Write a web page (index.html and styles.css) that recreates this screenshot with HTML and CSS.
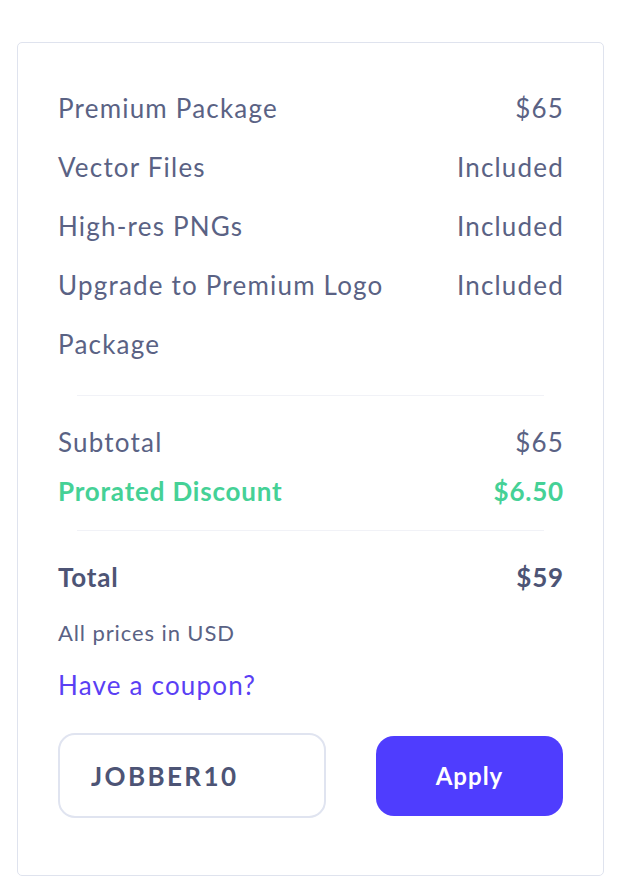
FILE: index.html
```html
<!DOCTYPE html>
<html lang="en">
<head>
<meta charset="utf-8">
<title>Order summary</title>
<link rel="stylesheet" href="styles.css">
</head>
<body>
<div class="card">
  <div class="items">
    <div class="row"><span class="label">Premium Package</span><span class="value">$65</span></div>
    <div class="row"><span class="label">Vector Files</span><span class="value">Included</span></div>
    <div class="row"><span class="label">High-res PNGs</span><span class="value">Included</span></div>
    <div class="row"><span class="label">Upgrade to Premium Logo Package</span><span class="value">Included</span></div>
  </div>
  <div class="divider"></div>
  <div class="sums">
    <div class="row"><span class="label">Subtotal</span><span class="value">$65</span></div>
    <div class="row discount"><span class="label">Prorated Discount</span><span class="value">$6.50</span></div>
  </div>
  <div class="divider divider-low"></div>
  <div class="row total"><span class="label">Total</span><span class="value">$59</span></div>
  <p class="note">All prices in USD</p>
  <a class="coupon-link" href="#">Have a coupon?</a>
  <div class="coupon">
    <input class="coupon-input" type="text" value="JOBBER10">
    <button class="apply" type="button">Apply</button>
  </div>
</div>
</body>
</html>
```
FILE: styles.css
```css
html, body {
  margin: 0;
  padding: 0;
  background: #ffffff;
}

body {
  font-family: Lato, "Noto Sans", sans-serif;
  color: #5a6284;
}

.card {
  box-sizing: border-box;
  width: 587px;
  margin: 42px 0 0 17px;
  padding: 36px 40px 57px 40px;
  border: 1px solid #dfe3ee;
  border-radius: 5px;
  background: #fff;
}

.row {
  display: flex;
  justify-content: space-between;
  align-items: flex-start;
  gap: 24px;
  font-size: 26px;
  letter-spacing: 1.2px;
}

.items .row {
  line-height: 59px;
}

.items .label {
  max-width: 350px;
}

.sums .row,
.total {
  line-height: 49px;
}

.value {
  white-space: nowrap;
  text-align: right;
  margin-right: -1px;
}

.divider {
  height: 1px;
  margin: 21px 19px 22px 19px;
  background: #f1f2f7;
}

.divider-low {
  margin-top: 14px;
}

.discount {
  color: #45d196;
  font-weight: 700;
  letter-spacing: 0.8px;
}

.total {
  font-weight: 700;
  color: #4d5475;
  letter-spacing: 0.8px;
}

.note {
  margin: 11px 0 0 0;
  font-size: 22px;
  line-height: 40px;
  letter-spacing: 0.9px;
  color: #5a6284;
}

.coupon-link {
  display: block;
  margin-top: 12px;
  font-size: 26px;
  line-height: 40px;
  color: #5a3ff4;
  text-decoration: none;
  letter-spacing: 1.2px;
}

.coupon {
  display: flex;
  align-items: center;
  justify-content: space-between;
  margin-top: 28px;
}

.coupon-input {
  box-sizing: border-box;
  width: 268px;
  height: 85px;
  padding: 0 0 0 31px;
  border: 2px solid #e0e4f0;
  border-radius: 17px;
  font-family: Lato, "Noto Sans", sans-serif;
  font-size: 26px;
  font-weight: 700;
  letter-spacing: 2.4px;
  color: #4d5475;
  background: #fff;
  outline: none;
}

.apply {
  width: 187px;
  height: 80px;
  border: none;
  border-radius: 18px;
  background: #4f3dfe;
  color: #ffffff;
  font-family: Lato, "Noto Sans", sans-serif;
  font-size: 24px;
  font-weight: 700;
  letter-spacing: 1px;
  cursor: pointer;
}
```
